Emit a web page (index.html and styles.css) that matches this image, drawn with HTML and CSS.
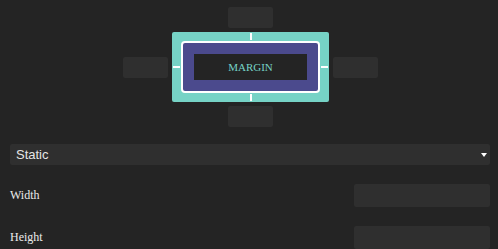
FILE: index.html
```html
<!DOCTYPE html>
<html>
<head>
<meta charset="utf-8">
<link rel="stylesheet" href="styles.css">
</head>
<body>
<div class="panel">
  <div class="box-model">
    <div class="field top"></div>
    <div class="field left"></div>
    <div class="margin-box">
      <span class="tick tick-top"></span>
      <span class="tick tick-left"></span>
      <span class="tick tick-right"></span>
      <span class="tick tick-bottom"></span>
      <div class="padding-box">
        <div class="content-box">MARGIN</div>
      </div>
    </div>
    <div class="field right"></div>
    <div class="field bottom"></div>
  </div>
  <div class="select">
    <span class="select-text">Static</span>
    <span class="caret"></span>
  </div>
  <div class="row">
    <span class="label">Width</span>
    <div class="input"></div>
  </div>
  <div class="row">
    <span class="label">Height</span>
    <div class="input"></div>
  </div>
</div>
</body>
</html>
```
FILE: styles.css
```css
html, body {
  margin: 0;
  padding: 0;
  background: #242424;
  height: 100%;
  overflow: hidden;
}
.panel {
  padding: 7px 8px 0 10px;
}
.box-model {
  display: grid;
  grid-template-columns: 45px 157px 45px;
  grid-template-rows: 21px 70px 21px;
  gap: 4px;
  justify-content: center;
  align-items: center;
  padding-left: 1px;
}
.field {
  background: #2f2f2f;
  border-radius: 2px;
  height: 21px;
}
.top { grid-column: 2; grid-row: 1; width: 45px; justify-self: center; }
.left { grid-column: 1; grid-row: 2; }
.right { grid-column: 3; grid-row: 2; }
.bottom { grid-column: 2; grid-row: 3; width: 45px; justify-self: center; }
.margin-box {
  grid-column: 2;
  grid-row: 2;
  position: relative;
  background: #76d3c6;
  border-radius: 2px;
  padding: 9px;
  height: 70px;
  box-sizing: border-box;
}
.padding-box {
  background: #4b4a8d;
  border: 2px solid #ffffff;
  border-radius: 4px;
  padding: 11px;
}
.content-box {
  background: #242424;
  height: 26px;
  display: flex;
  align-items: center;
  justify-content: center;
  color: #76d3c6;
  font-family: "Liberation Serif", serif;
  font-size: 11px;
  letter-spacing: 0;
}
.tick {
  position: absolute;
  background: #ffffff;
}
.tick-top { top: 1px; left: 78px; width: 2px; height: 7px; }
.tick-bottom { bottom: 1px; left: 78px; width: 2px; height: 7px; }
.tick-left { left: 1px; top: 34px; width: 7px; height: 2px; }
.tick-right { right: 1px; top: 34px; width: 7px; height: 2px; }
.select {
  margin-top: 17px;
  height: 21px;
  background: #2f2f2f;
  border-radius: 2px;
  display: flex;
  align-items: center;
  justify-content: space-between;
  padding: 0 3px 0 6px;
}
.select-text {
  font-family: "Liberation Sans", Arial, sans-serif;
  font-size: 13px;
  color: #e6e6e6;
}
.caret {
  width: 0;
  height: 0;
  border-left: 3.5px solid transparent;
  border-right: 3.5px solid transparent;
  border-top: 4px solid #ffffff;
  margin-top: 0px;
}
.row {
  margin-top: 19px;
  display: flex;
  align-items: center;
  justify-content: space-between;
  height: 23px;
}
.label {
  font-family: "Liberation Serif", serif;
  font-size: 12px;
  color: #ececec;
}
.input {
  width: 136px;
  height: 23px;
  background: #2f2f2f;
  border-radius: 2px;
}
```
